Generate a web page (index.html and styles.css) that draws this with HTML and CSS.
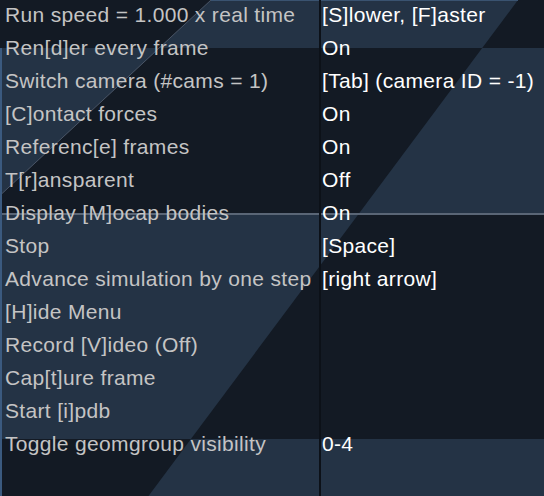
FILE: index.html
```html
<!DOCTYPE html>
<html>
<head>
<meta charset="utf-8">
<link rel="stylesheet" href="styles.css">
</head>
<body>
<div class="viewer">
  <svg class="scene" width="544" height="496" viewBox="0 0 544 496" xmlns="http://www.w3.org/2000/svg">
    <rect x="0" y="0" width="544" height="496" fill="#131a24"/>
    <polygon points="211,0 518,0 482.2,48 159.2,48" fill="#243345"/>
    <polygon points="0,48 159.2,48 0,195.4" fill="#243345"/>
    <polygon points="482.2,48 544,48 544,214 358.6,214" fill="#243345"/>
    <polygon points="0,214 358.6,214 190.9,439 0,439" fill="#243345"/>
    <polygon points="190.9,439 544,439 544,496 148.5,496" fill="#243345"/>
    <line x1="211" y1="0" x2="0" y2="195.4" stroke="#4a5566" stroke-width="1"/>
    <line x1="211" y1="0.5" x2="518" y2="0.5" stroke="#3a5370" stroke-width="1"/>
    <line x1="0" y1="214" x2="544" y2="214" stroke="#5a6676" stroke-width="2"/>
    <rect x="0" y="48" width="2" height="448" fill="#3b5a7f"/>
  </svg>
  <div class="menu">
    <div class="col keys">
      <div>Run speed = 1.000 x real time</div>
      <div>Ren[d]er every frame</div>
      <div>Switch camera (#cams = 1)</div>
      <div>[C]ontact forces</div>
      <div>Referenc[e] frames</div>
      <div>T[r]ansparent</div>
      <div>Display [M]ocap bodies</div>
      <div>Stop</div>
      <div>Advance simulation by one step</div>
      <div>[H]ide Menu</div>
      <div>Record [V]ideo (Off)</div>
      <div>Cap[t]ure frame</div>
      <div>Start [i]pdb</div>
      <div>Toggle geomgroup visibility</div>
    </div>
    <div class="col vals">
      <div>[S]lower, [F]aster</div>
      <div>On</div>
      <div>[Tab] (camera ID = -1)</div>
      <div>On</div>
      <div>On</div>
      <div>Off</div>
      <div>On</div>
      <div>[Space]</div>
      <div>[right arrow]</div>
      <div>&nbsp;</div>
      <div>&nbsp;</div>
      <div>&nbsp;</div>
      <div>&nbsp;</div>
      <div>0-4</div>
    </div>
  </div>
</div>
</body>
</html>
```

FILE: styles.css
```css
html, body {
  margin: 0;
  padding: 0;
  background: #131a24;
}
.viewer {
  position: relative;
  width: 544px;
  height: 496px;
  overflow: hidden;
}
.scene {
  position: absolute;
  left: 0;
  top: 0;
  display: block;
}
.menu {
  position: relative;
  display: flex;
  height: 496px;
  font-family: "Liberation Sans", Arial, sans-serif;
  font-size: 21px;
  line-height: 33px;
  letter-spacing: 0.33px;
  white-space: nowrap;
}
.col {
  box-sizing: border-box;
  height: 100%;
  padding-top: 0;
}
.col > div {
  height: 33px;
  position: relative;
  top: -2px;
}
.keys {
  width: 321px;
  padding-left: 5px;
  color: #c4c4c4;
  border-right: 2px solid #0c1118;
}
.vals {
  flex: 1;
  padding-left: 1px;
  color: #ffffff;
}
```
